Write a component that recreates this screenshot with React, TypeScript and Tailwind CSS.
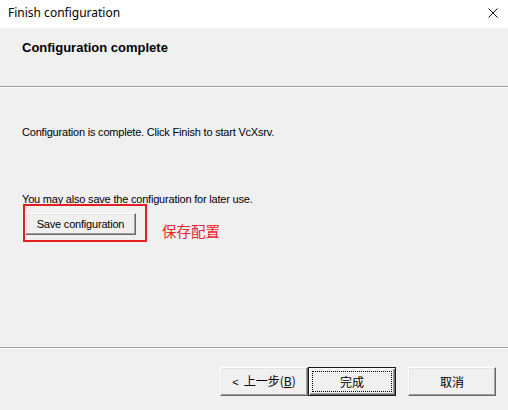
import React from "react";

function ClassicButton({
  children,
  isDefault = false,
  className = "",
}: {
  children: React.ReactNode;
  isDefault?: boolean;
  className?: string;
}) {
  if (isDefault) {
    return (
      <div
        className={`relative h-[29px] w-[88px] bg-[#f0f0f0] border border-[#1a1a1a] shadow-[inset_1px_1px_0_#ffffff,inset_-1px_-1px_0_#696969,inset_-2px_-2px_0_#a0a0a0] flex items-center justify-center ${className}`}
      >
        <div className="absolute left-[3px] top-[3px] right-[3px] bottom-[3px] border border-dotted border-black" />
        <span className="relative text-[12px] leading-[16px] text-black">{children}</span>
      </div>
    );
  }
  return (
    <div
      className={`h-[29px] w-[88px] bg-[#f0f0f0] border border-t-white border-l-white border-r-[#696969] border-b-[#696969] shadow-[inset_-1px_-1px_0_#a0a0a0,inset_1px_1px_0_#e3e3e3] flex items-center justify-center ${className}`}
    >
      <span className="text-[12px] leading-[16px] text-black whitespace-pre">{children}</span>
    </div>
  );
}

export default function App() {
  return (
    <div className="w-[508px] h-[410px] bg-[#f0f0f0] flex flex-col overflow-hidden font-['Liberation_Sans','Noto_Sans_CJK_SC',Arial,sans-serif] text-black">
      {/* Title bar */}
      <div className="h-[28px] shrink-0 bg-white flex items-start justify-between pl-[8px] pt-[5px] pr-[10px]">
        <span className="text-[12px] leading-[16px] font-['Noto_Sans',sans-serif] text-[#000]">
          Finish configuration
        </span>
        <svg width="10" height="10" viewBox="0 0 10 10" className="mt-[3px]" fill="none">
          <path d="M0.5 0.5 L9.5 9.5 M9.5 0.5 L0.5 9.5" stroke="#111" strokeWidth="1" />
        </svg>
      </div>

      {/* Header */}
      <div className="h-[58px] shrink-0 pl-[22px] pt-[7px]">
        <span className="text-[13px] leading-[15px] font-bold">Configuration complete</span>
      </div>
      <div className="h-px shrink-0 bg-[#a0a0a0]" />
      <div className="h-px shrink-0 bg-white" />

      {/* Body */}
      <div className="h-[259px] shrink-0 px-[22px] pt-[38px]">
        <p className="text-[11px] leading-[13px] tracking-[-0.2px]">
          Configuration is complete. Click Finish to start VcXsrv.
        </p>
        <p className="mt-[54px] text-[11px] leading-[13px] tracking-[-0.2px]">
          You may also save the configuration for later use.
        </p>
        <div className="relative mt-[7px] ml-[3px] flex items-start">
          <div className="h-[22px] w-[111px] bg-[#f0f0f0] border border-t-white border-l-white border-r-[#696969] border-b-[#696969] shadow-[inset_-1px_-1px_0_#a0a0a0,inset_1px_1px_0_#e3e3e3] flex items-center justify-center">
            <span className="text-[11px] leading-[13px] tracking-[-0.2px]">Save configuration</span>
          </div>
          <span className="ml-[26px] mt-[9px] text-[14.5px] leading-[17px] text-[#e5262b] font-['Noto_Sans_CJK_SC',sans-serif]">
            保存配置
          </span>
          <div className="absolute left-[-2px] top-[-9px] w-[124px] h-[38px] border-2 border-[#e31e24] pointer-events-none" />
        </div>
      </div>

      <div className="h-px shrink-0 bg-[#a0a0a0]" />
      <div className="h-px shrink-0 bg-white" />

      {/* Footer buttons */}
      <div className="flex-1 flex items-start justify-end pt-[18px] pr-[12px] font-['Noto_Sans_CJK_SC','Liberation_Sans',sans-serif]">
        <ClassicButton>
          <span className="font-['Liberation_Sans',sans-serif] text-[11px]">&lt;</span>
          <span className="inline-block w-[5px]" />
          上一步(<span className="underline">B</span>)
        </ClassicButton>
        <ClassicButton isDefault>完成</ClassicButton>
        <ClassicButton className="ml-[12px]">取消</ClassicButton>
      </div>
    </div>
  );
}
